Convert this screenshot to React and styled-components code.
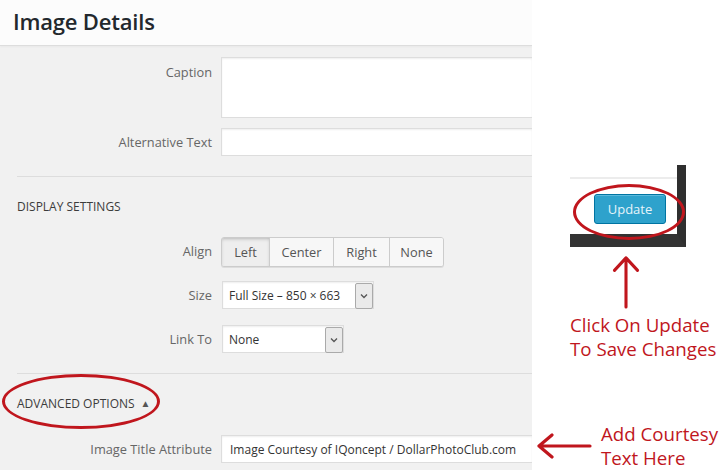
import React from 'react'
import styled, { createGlobalStyle } from 'styled-components'

const GlobalStyle = createGlobalStyle`
  html, body {
    margin: 0;
    padding: 0;
    background: #fff;
  }
  body {
    font-family: "Open Sans", "Liberation Sans", sans-serif;
    width: 719px;
    height: 470px;
    overflow: hidden;
  }
`

const RED = '#c0161d'

const Page = styled.div`
  display: flex;
  width: 719px;
  height: 470px;
`

const Panel = styled.div`
  width: 532px;
  flex: none;
  display: flex;
  flex-direction: column;
  background: #f1f1f1;
  overflow: hidden;
`

const Header = styled.div`
  height: 42px;
  background: #fcfcfc;
  border-bottom: 1px solid #dddddd;
  box-shadow: 0 1px 2px rgba(0, 0, 0, 0.04);
  display: flex;
  align-items: center;
  padding: 0 0 3px 13px;
`

const Title = styled.h1`
  margin: 0;
  font-size: 22px;
  font-weight: 600;
  color: #23282d;
  letter-spacing: -0.2px;
`

const Body = styled.div`
  padding: 11px 0 0 17px;
  display: flex;
  flex-direction: column;
`

const Row = styled.div`
  display: flex;
  align-items: flex-start;
  margin-top: ${p => p.$gap || 0}px;
`

const Label = styled.div`
  width: 195px;
  flex: none;
  text-align: right;
  padding-right: 9px;
  padding-top: ${p => p.$top || 6}px;
  font-size: 12.8px;
  line-height: 16px;
  color: #666;
  white-space: nowrap;
`

const Field = styled.div`
  flex: 1;
  height: ${p => p.$h || 28}px;
  box-sizing: border-box;
  background: #fff;
  border: 1px solid #dddddd;
  border-right: none;
  box-shadow: inset 0 1px 2px rgba(0, 0, 0, 0.07);
  font-size: 12px;
  color: #333;
  display: flex;
  align-items: center;
  padding-left: 8px;
  white-space: nowrap;
`

const Divider = styled.div`
  height: 0;
  border-top: 1px solid #dddddd;
  margin-top: ${p => p.$top}px;
`

const SectionTitle = styled.div`
  position: relative;
  margin-top: ${p => p.$top}px;
  font-size: 12px;
  line-height: 16px;
  font-weight: 400;
  color: #3c3c3c;
`

const Caret = styled.span`
  font-size: 10px;
  margin-left: 6px;
  vertical-align: 1px;
  color: #555;
`

const Ring = styled.div`
  position: absolute;
  left: ${p => p.$x}px;
  top: ${p => p.$y}px;
  width: ${p => p.$w}px;
  height: ${p => p.$h}px;
  border: 3px solid ${RED};
  border-radius: 50%;
  box-sizing: border-box;
`

const Group = styled.div`
  display: flex;
  height: 30px;
  box-sizing: border-box;
  border: 1px solid #cccccc;
  border-radius: 3px;
  background: #f7f7f7;
  box-shadow: 0 1px 0 #ddd;
  overflow: hidden;
`

const GroupButton = styled.div`
  width: ${p => p.$w}px;
  display: flex;
  align-items: center;
  justify-content: center;
  font-size: 12.8px;
  color: #555;
  background: ${p => (p.$active ? '#eeeeee' : '#f7f7f7')};
  box-shadow: ${p => (p.$active ? 'inset 0 2px 5px -3px rgba(0,0,0,0.5)' : 'none')};
  border-left: ${p => (p.$first ? 'none' : '1px solid #cccccc')};
`

const Select = styled.div`
  width: ${p => p.$w}px;
  height: 28px;
  box-sizing: border-box;
  display: flex;
  background: #fff;
  border: 1px solid #dddddd;
  box-shadow: inset 0 1px 2px rgba(0, 0, 0, 0.07);
  margin-left: 1px;
`

const SelectText = styled.div`
  flex: 1;
  display: flex;
  align-items: center;
  padding-left: 6px;
  font-size: 12px;
  color: #333;
  white-space: nowrap;
`

const SelectArrow = styled.div`
  width: 16px;
  flex: none;
  margin: 1px 0 -1px;
  background: #eaeaea;
  border: 1px solid #aaa;
  border-radius: 2px;
  display: flex;
  align-items: center;
  justify-content: center;
`

const Aside = styled.div`
  flex: 1;
  display: flex;
  flex-direction: column;
  padding-top: 165px;
`

const Shot = styled.div`
  position: relative;
  margin-left: 38px;
  width: 116px;
  height: 85px;
  box-sizing: border-box;
  border-right: 9px solid #2f2f2f;
  border-bottom: 13px solid #333;
  display: flex;
  flex-direction: column;
`

const ShotTop = styled.div`
  height: 12px;
  border-bottom: 2px solid #ececec;
  background: #fff;
`

const ShotBody = styled.div`
  flex: 1;
  display: flex;
  align-items: center;
  padding: 5px 0 0 24px;
  background: #fff;
`

const UpdateButton = styled.div`
  width: 72px;
  height: 30px;
  box-sizing: border-box;
  background: #2ea2cc;
  border: 1px solid #0074a2;
  border-radius: 3px;
  box-shadow: inset 0 1px 0 rgba(120, 200, 230, 0.6);
  color: #e6f4fa;
  font-size: 13px;
  display: flex;
  align-items: center;
  justify-content: center;
`

const ArrowUp = styled.svg`
  display: block;
  margin: 8px 0 0 79px;
`

const Note = styled.div`
  font-size: 18.7px;
  line-height: 24px;
  color: ${RED};
  white-space: nowrap;
`

const Hint = styled(Note)`
  margin: 4px 0 0 38px;
`

const Callout = styled.div`
  display: flex;
  align-items: center;
  margin: 61px 0 0 4px;
`

const ArrowLeft = styled.svg`
  flex: none;
  margin: 0 9px 0 0;
`

const Chevron = () => (
  <svg width="8" height="6" viewBox="0 0 8 6">
    <path d="M1 1.5 L4 4.5 L7 1.5" fill="none" stroke="#555" strokeWidth="1.3" />
  </svg>
)

const aligns = [
  { name: 'Left', w: 47, active: true },
  { name: 'Center', w: 63 },
  { name: 'Right', w: 55 },
  { name: 'None', w: 53 },
]

export default function App() {
  return (
    <Page>
      <GlobalStyle />
      <Panel>
        <Header>
          <Title>Image Details</Title>
        </Header>
        <Body>
          <Row>
            <Label $top={7}>Caption</Label>
            <Field $h={61} />
          </Row>
          <Row $gap={10}>
            <Label>Alternative Text</Label>
            <Field />
          </Row>
          <Divider $top={20} />
          <SectionTitle $top={22}>DISPLAY SETTINGS</SectionTitle>
          <Row $gap={22}>
            <Label $top={6}>Align</Label>
            <Group>
              {aligns.map((a, i) => (
                <GroupButton key={a.name} $w={a.w} $active={a.active} $first={i === 0}>
                  {a.name}
                </GroupButton>
              ))}
            </Group>
          </Row>
          <Row $gap={14}>
            <Label>Size</Label>
            <Select $w={152}>
              <SelectText>Full Size – 850 × 663</SelectText>
              <SelectArrow><Chevron /></SelectArrow>
            </Select>
          </Row>
          <Row $gap={16}>
            <Label>Link To</Label>
            <Select $w={122}>
              <SelectText>None</SelectText>
              <SelectArrow><Chevron /></SelectArrow>
            </Select>
          </Row>
          <Divider $top={20} />
          <SectionTitle $top={21}>
            <Ring $x={-15} $y={-21} $w={158} $h={55} />
            ADVANCED OPTIONS<Caret>▲</Caret>
          </SectionTitle>
          <Row $gap={23}>
            <Label>Image Title Attribute</Label>
            <Field>Image Courtesy of IQoncept / DollarPhotoClub.com</Field>
          </Row>
        </Body>
      </Panel>
      <Aside>
        <Shot>
          <ShotTop />
          <ShotBody>
            <UpdateButton>Update</UpdateButton>
          </ShotBody>
          <Ring $x={3} $y={19} $w={112} $h={56} />
        </Shot>
        <ArrowUp width="30" height="56" viewBox="0 0 30 56">
          <path d="M15 3 L15 54 M3 16 L15 3 L27 16" fill="none" stroke={RED} strokeWidth="3.2" strokeLinecap="round" strokeLinejoin="round" />
        </ArrowUp>
        <Hint>
          Click On Update
          <br />
          To Save Changes
        </Hint>
        <Callout>
          <ArrowLeft width="56" height="26" viewBox="0 0 56 26">
            <path d="M3 13 L54 13 M16 2 L3 13 L16 24" fill="none" stroke={RED} strokeWidth="3.2" strokeLinecap="round" strokeLinejoin="round" />
          </ArrowLeft>
          <Note>
            Add Courtesy
            <br />
            Text Here
          </Note>
        </Callout>
      </Aside>
    </Page>
  )
}
